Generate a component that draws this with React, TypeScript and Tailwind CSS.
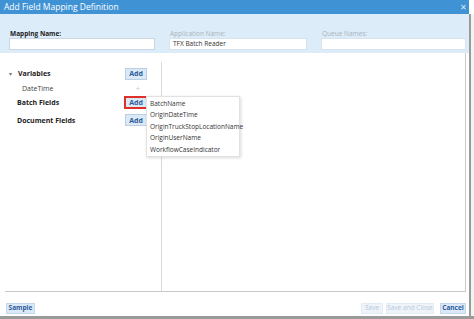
import React from "react";

const font = { fontFamily: '"Open Sans", "Noto Sans", Arial, sans-serif' };

function AddBtn({ red = false }: { red?: boolean }) {
  if (red) {
    return (
      <div className="w-[24px] h-[13px] border-2 border-[#e0302a] flex items-center justify-center bg-[#dbe8f6]">
        <span className="text-[7px] font-bold text-[#2b5c9c] leading-none">Add</span>
      </div>
    );
  }
  return (
    <div className="w-[22px] h-[12px] border border-[#b9cfe6] bg-[#dbe8f6] flex items-center justify-center">
      <span className="text-[7px] font-bold text-[#2b5c9c] leading-none">Add</span>
    </div>
  );
}

export default function App() {
  const items = [
    "BatchName",
    "OriginDateTime",
    "OriginTruckStopLocationName",
    "OriginUserName",
    "WorkflowCaseIndicator",
  ];
  return (
    <div className="w-[474px] h-[319px] overflow-hidden bg-white flex flex-col" style={font}>
      <div className="flex flex-1 min-h-0">
        <div className="w-[469px] flex flex-col">
          {/* Title bar */}
          <div className="h-[14px] bg-[#3f93d4] flex items-center justify-between pl-[4px] pr-[2px]">
            <span className="text-[8.5px] text-white leading-none">Add Field Mapping Definition</span>
            <span className="text-[8px] text-[#dbe9f7] leading-none">✕</span>
          </div>
          {/* Header */}
          <div className="h-[39px] bg-[#ddecf9] flex pl-[9px] pt-[15px] gap-[14px]">
            <div className="flex flex-col w-[146px]">
              <span className="text-[6.5px] font-bold text-[#222] leading-[9px] pl-[1px]">Mapping Name:</span>
              <div className="h-[12px] bg-white border border-[#c9d6e3]" />
            </div>
            <div className="flex flex-col w-[138px]">
              <span className="text-[6.5px] text-[#a9b3bd] leading-[9px] pl-[1px]">Application Name:</span>
              <div className="h-[12px] bg-white border border-[#d6e2ee] flex items-center pl-[3px]">
                <span className="text-[6.5px] text-[#333] leading-none">TFX Batch Reader</span>
              </div>
            </div>
            <div className="flex flex-col w-[145px]">
              <span className="text-[6.5px] text-[#a9b3bd] leading-[9px] pl-[1px]">Queue Names:</span>
              <div className="h-[12px] bg-white border border-[#d6e2ee]" />
            </div>
          </div>
          {/* Content */}
          <div className="flex-1 flex flex-col pl-[5px] pr-[3px]">
            <div className="h-[239px] border-b border-r border-[#c9c9c9] flex">
              <div className="w-[156px] relative pt-[14px]">
                <div className="flex items-center h-[13px]">
                  <span className="text-[6px] text-[#777] w-[13px] pl-[4px] leading-none">▾</span>
                  <span className="text-[7px] font-bold text-[#222] leading-none flex-1">Variables</span>
                  <div className="mr-[14px]"><AddBtn /></div>
                </div>
                <div className="flex items-center h-[16px]">
                  <span className="text-[7px] text-[#444] leading-none pl-[17px] flex-1">DateTime</span>
                  <span className="text-[8px] text-[#ccc] leading-none mr-[21px]">+</span>
                </div>
                <div className="flex items-center h-[13px]">
                  <span className="text-[7px] font-bold text-[#222] leading-none pl-[12px] flex-1">Batch Fields</span>
                  <div className="mr-[13px]"><AddBtn red /></div>
                </div>
                <div className="flex items-center h-[12px] mt-[5px]">
                  <span className="text-[7px] font-bold text-[#222] leading-none pl-[12px] flex-1">Document Fields</span>
                  <div className="mr-[14px]"><AddBtn /></div>
                </div>
                {/* Dropdown */}
                <div className="absolute left-[141px] top-[43px] w-[94px] h-[61px] bg-white border border-[#e2e2e2] shadow-[1px_1px_3px_rgba(0,0,0,0.15)] z-10 flex flex-col pt-[1px] pl-[3px]">
                  {items.map((t) => (
                    <div key={t} className="h-[11.6px] flex items-center">
                      <span className="text-[6.5px] text-[#333] leading-none whitespace-nowrap">{t}</span>
                    </div>
                  ))}
                </div>
              </div>
              <div className="flex-1 flex flex-col pt-[9px]">
                <div className="flex-1 border-l border-[#d9d9d9]" />
              </div>
            </div>
            {/* Footer */}
            <div className="flex items-center justify-between pt-[11px] pl-[1px] pr-[0px]">
              <div className="h-[11px] w-[29px] bg-[#dbe8f6] border border-[#c3d6ea] flex items-center justify-center">
                <span className="text-[6.5px] font-bold text-[#2b5c9c] leading-none">Sample</span>
              </div>
              <div className="flex gap-[3px]">
                <div className="h-[11px] w-[22px] bg-[#eef4fa] border border-[#e3ecf5] flex items-center justify-center">
                  <span className="text-[6.5px] text-[#b9c8d8] leading-none">Save</span>
                </div>
                <div className="h-[11px] w-[48px] bg-[#eef4fa] border border-[#e3ecf5] flex items-center justify-center mr-[3px]">
                  <span className="text-[6.5px] text-[#b9c8d8] leading-none">Save and Close</span>
                </div>
                <div className="h-[11px] w-[26px] bg-[#dbe8f6] border border-[#c3d6ea] flex items-center justify-center">
                  <span className="text-[6.5px] font-bold text-[#2b5c9c] leading-none">Cancel</span>
                </div>
              </div>
            </div>
          </div>
        </div>
        <div className="w-[2px] bg-[#9a9a9a] mt-[14px]" />
        <div className="flex-1 bg-[#f4f4f4] mt-[14px]" />
      </div>
      <div className="h-[3px] bg-[#9a9a9a]" />
    </div>
  );
}
